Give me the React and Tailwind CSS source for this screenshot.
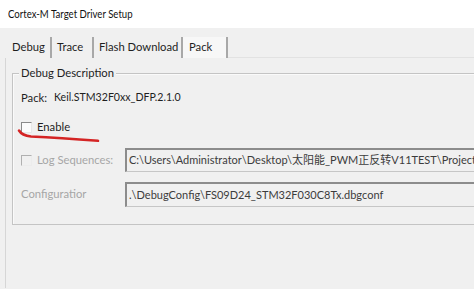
export default function App() {
  const font = { fontFamily: 'Lato, "Noto Sans CJK SC", sans-serif' };
  return (
    <div
      className="relative w-[474px] h-[289px] overflow-hidden bg-[#f0f0f0] text-[11.25px] text-[#1e1e1e] whitespace-nowrap"
      style={font}
    >
      {/* title bar */}
      <div className="h-[28px] bg-white flex items-center pl-[8px] text-[12px] leading-none text-[#111]">
        <span className="inline-block origin-left scale-x-[0.8]">Cortex-M Target Driver Setup</span>
      </div>

      <div className="pt-[9px]">
        {/* tabs */}
        <div className="flex h-[21px] items-stretch leading-[20px]">
          <div className="shrink-0 ml-[6px] w-[46px] pl-[6px] border-r-2 border-[#a8a8a8]">Debug</div>
          <div className="shrink-0 w-[42px] pl-[5px] border-r-2 border-[#a8a8a8]">Trace</div>
          <div className="shrink-0 w-[89px] pl-[5px] border-r-2 border-[#a8a8a8]">Flash Download</div>
          <div className="shrink-0 w-[45px] pl-[6px] bg-[#f7f7f7] border-r-2 border-[#a8a8a8]">Pack</div>
          <div className="flex-1 border-b border-[#e2e2e2]" />
        </div>

        {/* panel */}
        <div className="ml-[5px] h-[230px] border-l border-[#d6d6d6] pl-[6px] pt-[15px]">
          <div className="relative w-[520px] h-[152px] border border-[#c4c4c4] shadow-[inset_1px_1px_0_#fafafa]">
            <span className="absolute -top-[9px] left-[6px] px-[2px] bg-[#f0f0f0] leading-[16px]">
              Debug Description
            </span>

            <div className="pl-[8px] pt-[16px]">
              <div className="flex h-[16px] items-center">
                <span className="shrink-0 w-[33px]">Pack:</span>
                <span className="text-[10.6px]">Keil.STM32F0xx_DFP.2.1.0</span>
              </div>

              <div className="mt-[13px] flex h-[16px] items-center">
                <span className="shrink-0 w-[11px] h-[11px] border-t border-l border-[#8a8a8a] border-b border-r border-b-[#e8e8e8] border-r-[#e8e8e8] bg-[#fbfbfb]" />
                <span className="ml-[5px]">Enable</span>
              </div>

              <div className="mt-[13px] flex h-[24px] items-center text-[#a6a6a6]">
                <span className="shrink-0 w-[11px] h-[11px] border-t border-l border-[#b0b0b0] border-b border-r border-b-[#ececec] border-r-[#ececec]" />
                <span className="shrink-0 ml-[5px] w-[88px]">Log Sequences:</span>
                <div className="min-w-0 flex-1 h-[24px] overflow-hidden border-t-2 border-l-2 border-[#8c8c8c] border-b border-b-[#c6c6c6] pl-[2px] flex items-center text-[11px] text-[#3c3c3c]">
                  C:\Users\Administrator\Desktop\太阳能_PWM正反转V11TEST\Project
                </div>
              </div>

              <div className="mt-[10px] flex h-[25px] items-center text-[#a6a6a6]">
                <span className="shrink-0 w-[104px]">Configuratior</span>
                <div className="min-w-0 flex-1 h-[25px] overflow-hidden border-t-2 border-l-2 border-[#8c8c8c] border-b border-b-[#c6c6c6] pl-[2px] flex items-center text-[11px] text-[#3c3c3c]">
                  .\DebugConfig\FS09D24_STM32F030C8Tx.dbgconf
                </div>
              </div>
            </div>
          </div>
        </div>
      </div>

      {/* red pen mark */}
      <svg className="absolute left-0 top-0" width="474" height="289" viewBox="0 0 474 289">
        <path
          d="M19 130.5 Q22 135.5 31 136.5 Q60 138 98 140.8"
          fill="none"
          stroke="#d42424"
          strokeWidth="2.6"
          strokeLinecap="round"
        />
      </svg>
    </div>
  );
}
